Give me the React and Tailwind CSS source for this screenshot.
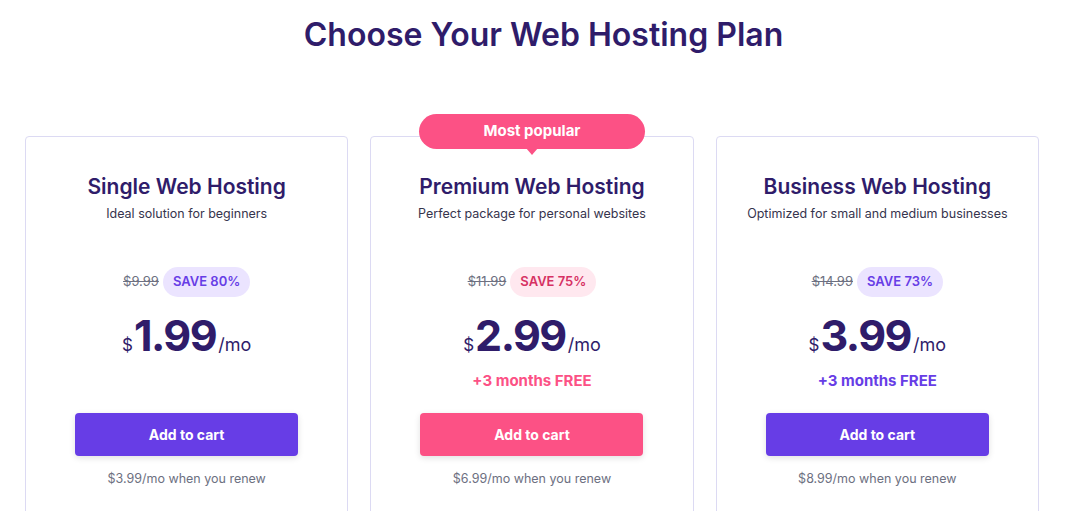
import React from "react";

const plans = [
  {
    name: "Single Web Hosting",
    desc: "Ideal solution for beginners",
    old: "$9.99",
    save: "SAVE 80%",
    price: "1.99",
    free: null,
    renew: "$3.99/mo when you renew",
    popular: false,
  },
  {
    name: "Premium Web Hosting",
    desc: "Perfect package for personal websites",
    old: "$11.99",
    save: "SAVE 75%",
    price: "2.99",
    free: "+3 months FREE",
    renew: "$6.99/mo when you renew",
    popular: true,
  },
  {
    name: "Business Web Hosting",
    desc: "Optimized for small and medium businesses",
    old: "$14.99",
    save: "SAVE 73%",
    price: "3.99",
    free: "+3 months FREE",
    renew: "$8.99/mo when you renew",
    popular: false,
  },
];

const PlanCard = ({ plan }) => {
  const pink = plan.popular;
  return (
    <div className="relative h-[400px] rounded-[4px] border border-[#dcdaf3] bg-white flex flex-col items-center pt-[36px]">
      {pink && (
        <div className="absolute top-[-23px] left-1/2 -translate-x-1/2 w-[226px] h-[35px] rounded-full bg-[#fc5185] flex items-center justify-center text-white text-[15px] font-bold">
          Most popular
          <span className="absolute bottom-[-6px] left-1/2 -translate-x-1/2 w-0 h-0 border-l-[6px] border-r-[6px] border-t-[7px] border-l-transparent border-r-transparent border-t-[#fc5185]" />
        </div>
      )}
      <h2 className="text-[21px] leading-[28px] font-semibold text-[#2f1c6a]">{plan.name}</h2>
      <p className="text-[12.5px] leading-[18px] text-[#36344d] mt-[4px]">{plan.desc}</p>

      <div className="flex items-center gap-[4px] mt-[44px] h-[30px]">
        <span className="text-[13px] text-[#6d7081] line-through">{plan.old}</span>
        <span
          className={`h-[30px] px-[10px] rounded-full flex items-center text-[13px] font-semibold ${
            pink ? "bg-[#ffe8ef] text-[#d63163]" : "bg-[#ebe4ff] text-[#673de6]"
          }`}
        >
          {plan.save}
        </span>
      </div>

      <div className="flex items-baseline text-[#2f1c6a] mt-[9px] h-[58px]">
        <span className="text-[17px] font-normal mr-[1px]">$</span>
        <span className="text-[43px] leading-[58px] font-bold tracking-[-1.5px]">{plan.price}</span>
        <span className="text-[18px] font-normal ml-[2px]">/mo</span>
      </div>

      <div className="h-[24px] flex items-center mt-[5px]">
        {plan.free && (
          <span className={`text-[15px] font-bold ${pink ? "text-[#fc5185]" : "text-[#673de6]"}`}>
            {plan.free}
          </span>
        )}
      </div>

      <button
        className={`mt-[20px] w-[223px] h-[43px] rounded-[4px] text-white text-[14px] font-bold shadow-[0_2px_6px_rgba(0,0,0,0.12)] ${
          pink ? "bg-[#fc5185]" : "bg-[#673de6]"
        }`}
      >
        Add to cart
      </button>
      <p className="mt-[13px] text-[12.5px] leading-[20px] text-[#6d7081]">{plan.renew}</p>
    </div>
  );
};

const App = () => {
  return (
    <div className="w-full h-[511px] overflow-hidden bg-white" style={{ fontFamily: "Inter, 'Noto Sans', sans-serif" }}>
      <h1 className="text-center text-[32px] leading-[40px] font-semibold text-[#2f1c6a] pt-[15px] pl-[20px]">
        Choose Your Web Hosting Plan
      </h1>
      <div className="ml-[25px] w-[1014px] grid grid-cols-3 gap-[22px] mt-[81px]">
        {plans.map((p) => (
          <PlanCard key={p.name} plan={p} />
        ))}
      </div>
    </div>
  );
};

export default App;
